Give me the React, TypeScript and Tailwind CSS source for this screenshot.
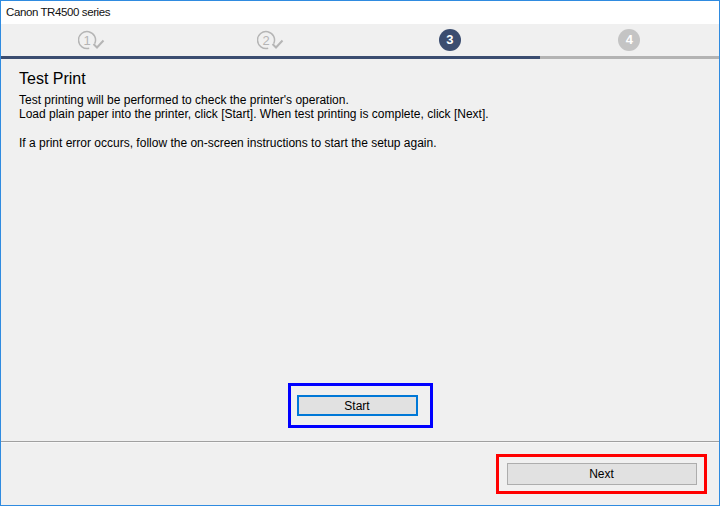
function DoneStep({ n }: { n: number }) {
  return (
    <svg width="28" height="22" viewBox="0 0 28 22" className="ml-[2px]">
      <path d="M 16.7 14.6 A 8.5 8.5 0 1 0 11.2 19.2" fill="none" stroke="#b5b5b5" strokeWidth="1.5" />
      <text x="9" y="15.5" textAnchor="middle" fontSize="13" fill="#b5b5b5" fontFamily="Liberation Sans, Arial, sans-serif">
        {n}
      </text>
      <path d="M 15.5 15 L 19 18.5 L 25.5 11.5" fill="none" stroke="#b5b5b5" strokeWidth="2" />
    </svg>
  )
}

function NumStep({ n, active }: { n: number; active?: boolean }) {
  return (
    <div
      className={
        'w-[22px] h-[22px] rounded-full flex items-center justify-center text-white text-[13px] font-bold ' +
        (active ? 'bg-[#3b4d70]' : 'bg-[#c4c4c4]')
      }
    >
      {n}
    </div>
  )
}

export default function App() {
  return (
    <div
      className="w-[720px] h-[506px] flex flex-col border border-[#2f8be0] bg-[#f0f0f0] text-black overflow-hidden"
      style={{ fontFamily: '"Liberation Sans", Arial, sans-serif' }}
    >
      {/* title bar */}
      <div className="h-[23px] bg-white flex items-center pl-[5px] text-[11.5px] tracking-[-0.4px] text-[#111]">
        Canon TR4500 series
      </div>

      {/* steps */}
      <div className="h-[32px] grid grid-cols-4 items-center">
        <div className="flex justify-center"><DoneStep n={1} /></div>
        <div className="flex justify-center"><DoneStep n={2} /></div>
        <div className="flex justify-center"><NumStep n={3} active /></div>
        <div className="flex justify-center"><NumStep n={4} /></div>
      </div>
      <div className="flex h-[3px]">
        <div className="w-[539px] bg-[#3b4d70]" />
        <div className="flex-1 bg-[#b3b3b3]" />
      </div>

      {/* content */}
      <div className="flex-1 flex flex-col px-[18px] pt-[10px]">
        <h1 className="text-[16px] leading-[20px] text-black">Test Print</h1>
        <p className="mt-[4px] text-[12px] leading-[14px]">
          Test printing will be performed to check the printer's operation.
          <br />
          Load plain paper into the printer, click [Start]. When test printing is complete, click [Next].
        </p>
        <p className="mt-[15px] text-[12px] leading-[14px]">
          If a print error occurs, follow the on-screen instructions to start the setup again.
        </p>

        <div className="mt-auto mb-[13px] flex justify-center">
          <div className="w-[145px] h-[45px] border-[3px] border-[#0000ff] flex items-center pl-[6px]">
            <button className="w-[121px] h-[21px] bg-[#e1e1e1] border border-[#0078d7] outline outline-1 outline-[#0078d7] -outline-offset-2 text-[12px] leading-none">
              Start
            </button>
          </div>
        </div>
      </div>

      {/* footer */}
      <div className="h-[1px] bg-[#a0a0a0]" />
      <div className="h-[1px] bg-[#f8f8f8]" />
      <div className="h-[62px] flex justify-end items-start pt-[11px] pr-[12px]">
        <div className="w-[211px] h-[40px] border-[3px] border-[#ff0000] flex items-center justify-center">
          <button className="w-[190px] h-[22px] bg-[#e1e1e1] border border-[#adadad] text-[12px] leading-none">Next</button>
        </div>
      </div>
    </div>
  )
}
